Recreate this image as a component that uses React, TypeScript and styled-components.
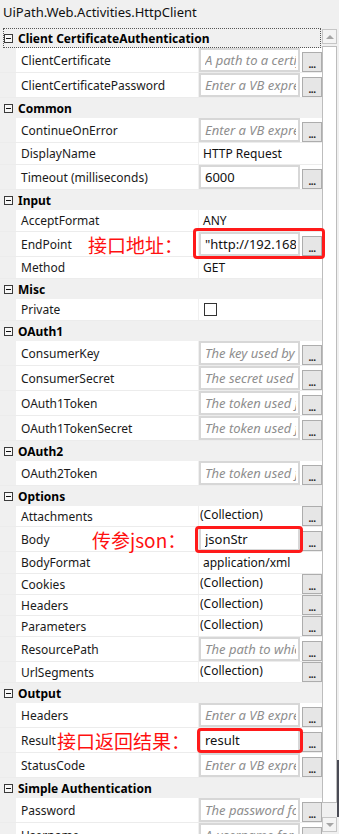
import React from "react";
import styled, { createGlobalStyle } from "styled-components";

type Kind = "input" | "text" | "collection" | "check";

interface Note {
  label: string;
  labelLeft: number;
  boxLeft: number;
  boxTop: number;
  boxWidth: number;
  boxHeight: number;
}

interface Prop {
  name: string;
  kind: Kind;
  value?: string;
  hint?: boolean;
  note?: Note;
}

interface Section {
  title: string;
  focused?: boolean;
  props: Prop[];
}

const ROW_HEIGHT: Record<Kind, number> = {
  input: 25,
  text: 22,
  collection: 21,
  check: 22,
};

const VB = "Enter a VB expression";

const sections: Section[] = [
  {
    title: "Client CertificateAuthentication",
    focused: true,
    props: [
      { name: "ClientCertificate", kind: "input", value: "A path to a certificate file", hint: true },
      { name: "ClientCertificatePassword", kind: "input", value: VB, hint: true },
    ],
  },
  {
    title: "Common",
    props: [
      { name: "ContinueOnError", kind: "input", value: VB, hint: true },
      { name: "DisplayName", kind: "text", value: "HTTP Request" },
      { name: "Timeout (milliseconds)", kind: "input", value: "6000" },
    ],
  },
  {
    title: "Input",
    props: [
      { name: "AcceptFormat", kind: "text", value: "ANY" },
      {
        name: "EndPoint",
        kind: "input",
        value: "\"http://192.168.1.100:8080/api\"",
        note: { label: "接口地址：", labelLeft: 88, boxLeft: 193, boxTop: -4, boxWidth: 132, boxHeight: 31 },
      },
      { name: "Method", kind: "text", value: "GET" },
    ],
  },
  { title: "Misc", props: [{ name: "Private", kind: "check" }] },
  {
    title: "OAuth1",
    props: [
      { name: "ConsumerKey", kind: "input", value: "The key used by the consumer", hint: true },
      { name: "ConsumerSecret", kind: "input", value: "The secret used by the consumer", hint: true },
      { name: "OAuth1Token", kind: "input", value: "The token used for requests", hint: true },
      { name: "OAuth1TokenSecret", kind: "input", value: "The token used for requests", hint: true },
    ],
  },
  {
    title: "OAuth2",
    props: [{ name: "OAuth2Token", kind: "input", value: "The token used for requests", hint: true }],
  },
  {
    title: "Options",
    props: [
      { name: "Attachments", kind: "collection", value: "(Collection)" },
      {
        name: "Body",
        kind: "input",
        value: "jsonStr",
        note: { label: "传参json：", labelLeft: 92, boxLeft: 195, boxTop: -1, boxWidth: 108, boxHeight: 27 },
      },
      { name: "BodyFormat", kind: "text", value: "application/xml" },
      { name: "Cookies", kind: "collection", value: "(Collection)" },
      { name: "Headers", kind: "collection", value: "(Collection)" },
      { name: "Parameters", kind: "collection", value: "(Collection)" },
      { name: "ResourcePath", kind: "input", value: "The path to which the request is sent", hint: true },
      { name: "UrlSegments", kind: "collection", value: "(Collection)" },
    ],
  },
  {
    title: "Output",
    props: [
      { name: "Headers", kind: "input", value: VB, hint: true },
      {
        name: "Result",
        kind: "input",
        value: "result",
        note: { label: "接口返回结果：", labelLeft: 57, boxLeft: 197, boxTop: 0, boxWidth: 106, boxHeight: 25 },
      },
      { name: "StatusCode", kind: "input", value: VB, hint: true },
    ],
  },
  {
    title: "Simple Authentication",
    props: [
      { name: "Password", kind: "input", value: "The password for basic authentication", hint: true },
      { name: "Username", kind: "input", value: "A username for basic authentication", hint: true },
    ],
  },
];

export default function App() {
  return (
    <>
      <GlobalStyle />
      <Window>
        <TitleBar>UiPath.Web.Activities.HttpClient</TitleBar>
        <Body>
          <Grid>
            {sections.map((section) => (
              <React.Fragment key={section.title}>
                <CategoryRow $focused={section.focused}>
                  <Expander />
                  <CategoryTitle>{section.title}</CategoryTitle>
                </CategoryRow>
                {section.props.map((prop) => (
                  <PropRow key={section.title + prop.name} $h={ROW_HEIGHT[prop.kind]}>
                    <Margin />
                    <NameCell>{prop.name}</NameCell>
                    {renderValue(prop)}
                    {prop.note && (
                      <>
                        <NoteLabel $left={prop.note.labelLeft}>{prop.note.label}</NoteLabel>
                        <NoteBox
                          $left={prop.note.boxLeft}
                          $top={prop.note.boxTop}
                          $w={prop.note.boxWidth}
                          $h={prop.note.boxHeight}
                        />
                      </>
                    )}
                  </PropRow>
                ))}
              </React.Fragment>
            ))}
          </Grid>
          <ScrollBar>
            <ArrowButton>
              <Arrow $up />
            </ArrowButton>
            <Thumb />
            <ArrowButton>
              <Arrow />
            </ArrowButton>
          </ScrollBar>
          <SideStrip>
            <SideMark />
          </SideStrip>
        </Body>
      </Window>
    </>
  );
}

function renderValue(prop: Prop) {
  switch (prop.kind) {
    case "input":
      return (
        <ValueCell>
          <TextBox $hint={prop.hint}>
            <BoxText>{prop.value}</BoxText>
          </TextBox>
          <MoreButton>...</MoreButton>
        </ValueCell>
      );
    case "collection":
      return (
        <ValueCell>
          <CollectionText>{prop.value}</CollectionText>
          <MoreButton>...</MoreButton>
        </ValueCell>
      );
    case "check":
      return (
        <ValueCell>
          <CheckBox />
        </ValueCell>
      );
    default:
      return (
        <ValueCell>
          <PlainText>{prop.value}</PlainText>
        </ValueCell>
      );
  }
}

// styles
const GlobalStyle = createGlobalStyle`
  html, body {
    margin: 0;
    padding: 0;
    background: #f0f0f0;
  }
  body {
    font-family: "Noto Sans", "Noto Sans CJK SC", sans-serif;
    font-size: 12px;
    color: #000;
  }
`;

const Window = styled.div`
  width: 339px;
  height: 834px;
  overflow: hidden;
  display: flex;
  flex-direction: column;
  background: #f0f0f0;
`;

const TitleBar = styled.div`
  height: 28px;
  flex-shrink: 0;
  display: flex;
  align-items: center;
  padding: 0 0 4px 3px;
  box-sizing: border-box;
  font-size: 13px;
  color: #111;
  white-space: nowrap;
`;

const Body = styled.div`
  flex: 1;
  min-height: 0;
  display: flex;
`;

const Grid = styled.div`
  width: 322px;
  flex-shrink: 0;
  display: flex;
  flex-direction: column;
`;

const CategoryRow = styled.div<{ $focused?: boolean }>`
  position: relative;
  height: 20px;
  flex-shrink: 0;
  display: flex;
  align-items: center;
  padding-left: 4px;

  &::after {
    content: "";
    display: ${({ $focused }) => ($focused ? "block" : "none")};
    position: absolute;
    left: 3px;
    right: 1px;
    top: 0;
    bottom: 0;
    border: 1px dotted #555;
  }
`;

const Expander = styled.span`
  position: relative;
  width: 9px;
  height: 9px;
  box-sizing: border-box;
  border: 1px solid #3a3a3a;
  background: #f7f7f7;
  flex-shrink: 0;

  &::before {
    content: "";
    position: absolute;
    left: 1px;
    top: 3px;
    width: 5px;
    height: 1px;
    background: #111;
  }
`;

const CategoryTitle = styled.span`
  margin-left: 5px;
  font-weight: 700;
  white-space: nowrap;
  color: #000;
`;

const PropRow = styled.div<{ $h: number }>`
  position: relative;
  height: ${({ $h }) => $h}px;
  flex-shrink: 0;
  display: grid;
  grid-template-columns: 15px 182px 123px;
  column-gap: 1px;
  border-bottom: 1px solid #ececec;
  box-sizing: border-box;
  width: 321px;
`;

const Margin = styled.div``;

const NameCell = styled.div`
  background: #fff;
  display: flex;
  align-items: center;
  padding-left: 5px;
  white-space: nowrap;
  overflow: hidden;
  color: #1a1a1a;
`;

const ValueCell = styled.div`
  background: #fff;
  display: flex;
  align-items: center;
  overflow: hidden;
`;

const TextBox = styled.div<{ $hint?: boolean }>`
  width: 101px;
  height: 24px;
  flex-shrink: 0;
  box-sizing: border-box;
  border: 2px solid #d7d7d7;
  padding: 0 2px 0 4px;
  display: flex;
  align-items: center;
  overflow: hidden;
  font-size: 13px;
  font-style: ${({ $hint }) => ($hint ? "italic" : "normal")};
  color: ${({ $hint }) => ($hint ? "#8e8e8e" : "#111")};
`;

const BoxText = styled.span`
  display: block;
  width: 100%;
  overflow: hidden;
  white-space: nowrap;
`;

const MoreButton = styled.div`
  width: 20px;
  height: 20px;
  margin-left: auto;
  box-sizing: border-box;
  border: 1px solid #adadad;
  background: #e6e6e6;
  display: flex;
  align-items: flex-end;
  justify-content: center;
  padding-bottom: 4px;
  font-size: 10px;
  font-weight: 700;
  line-height: 6px;
  letter-spacing: -0.5px;
  color: #222;
  align-self: flex-end;
`;

const PlainText = styled.span`
  padding-left: 4px;
  white-space: nowrap;
  color: #111;
`;

const CollectionText = styled.span`
  padding-left: 1px;
  align-self: flex-start;
  white-space: nowrap;
  color: #111;
`;

const CheckBox = styled.span`
  width: 13px;
  height: 13px;
  margin-left: 5px;
  box-sizing: border-box;
  border: 1px solid #333;
  background: #fff;
`;

const NoteLabel = styled.span<{ $left: number }>`
  position: absolute;
  left: ${({ $left }) => $left}px;
  top: 50%;
  transform: translateY(-50%);
  font-family: "Noto Sans CJK SC", "Noto Sans", sans-serif;
  font-size: 19px;
  line-height: 1;
  color: #ff1010;
  white-space: nowrap;
  z-index: 2;
`;

const NoteBox = styled.div<{ $left: number; $top: number; $w: number; $h: number }>`
  position: absolute;
  left: ${({ $left }) => $left}px;
  top: ${({ $top }) => $top}px;
  width: ${({ $w }) => $w}px;
  height: ${({ $h }) => $h}px;
  box-sizing: border-box;
  border: 3px solid #ff1a1a;
  border-radius: 4px;
  z-index: 2;
`;

const ScrollBar = styled.div`
  width: 15px;
  flex-shrink: 0;
  display: flex;
  flex-direction: column;
  padding: 1px 0 2px;
  box-sizing: border-box;
`;

const ArrowButton = styled.div`
  height: 15px;
  flex-shrink: 0;
  box-sizing: border-box;
  border: 1px solid #c6c6c6;
  background: #f4f4f4;
  display: flex;
  align-items: center;
  justify-content: center;
  margin-top: auto;

  &:first-child {
    margin-top: 0;
  }
`;

const Arrow = styled.span<{ $up?: boolean }>`
  width: 0;
  height: 0;
  border-left: 4px solid transparent;
  border-right: 4px solid transparent;
  ${({ $up }) =>
    $up ? "border-bottom: 4px solid #a6a6a6;" : "border-top: 4px solid #a6a6a6;"}
`;

const Thumb = styled.div`
  height: 757px;
  margin-top: 2px;
  flex-shrink: 0;
  box-sizing: border-box;
  border: 1px solid #bdbdbd;
  background: #fff;
`;

const SideStrip = styled.div`
  width: 2px;
  flex-shrink: 0;
`;

const SideMark = styled.div`
  margin-top: 732px;
  height: 57px;
  background: #4a4b55;
`;
